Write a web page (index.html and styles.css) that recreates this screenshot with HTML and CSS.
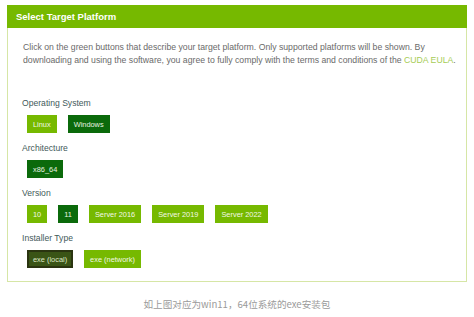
FILE: index.html
```html
<!DOCTYPE html>
<html>
<head>
<meta charset="utf-8">
<link rel="stylesheet" href="styles.css">
</head>
<body>
<div class="panel">
  <div class="panel-head">Select Target Platform</div>
  <div class="panel-body">
    <p class="intro">Click on the green buttons that describe your target platform. Only supported platforms will be shown. By<br>downloading and using the software, you agree to fully comply with the terms and conditions of the <span class="link">CUDA EULA</span>.</p>
    <div class="section">
      <div class="label">Operating System</div>
      <div class="btns">
        <span class="btn">Linux</span>
        <span class="btn on">Windows</span>
      </div>
    </div>
    <div class="section">
      <div class="label">Architecture</div>
      <div class="btns">
        <span class="btn on">x86_64</span>
      </div>
    </div>
    <div class="section">
      <div class="label">Version</div>
      <div class="btns">
        <span class="btn">10</span>
        <span class="btn on">11</span>
        <span class="btn">Server 2016</span>
        <span class="btn">Server 2019</span>
        <span class="btn">Server 2022</span>
      </div>
    </div>
    <div class="section last">
      <div class="label">Installer Type</div>
      <div class="btns">
        <span class="btn sel">exe (local)</span>
        <span class="btn">exe (network)</span>
      </div>
    </div>
  </div>
</div>
<p class="caption">如上图对应为win11，64位系统的exe安装包</p>
</body>
</html>
```

FILE: styles.css
```css
html, body {
  margin: 0;
  padding: 0;
  background: #ffffff;
}
body {
  font-family: "Liberation Sans", Arial, sans-serif;
}
.panel {
  margin: 5px 0 0 7px;
  width: 460px;
  box-sizing: border-box;
  border: 1px solid #d6e6a6;
  border-top: none;
  background: #fff;
}
.panel-head {
  background: #76b900;
  color: #ffffff;
  font-weight: bold;
  font-size: 9.5px;
  height: 23px;
  line-height: 23px;
  padding-left: 9px;
  margin: 0 -1px;
}
.panel-body {
  padding: 13px 10px 13px 14px;
}
.intro {
  margin: 0 0 30px 1px;
  font-size: 8.7px;
  line-height: 13px;
  color: #6a6a6a;
  white-space: nowrap;
}
.link {
  color: #a6cc55;
}
.section {
  margin-bottom: 9px;
}
.section.last {
  margin-bottom: 0;
}
.label {
  font-size: 8.6px;
  line-height: 12px;
  color: #3f5a5a;
  margin-bottom: 6px;
  font-weight: 500;
}
.btns {
  display: flex;
  gap: 11px;
  padding-left: 5px;
}
.btn {
  display: inline-flex;
  align-items: center;
  justify-content: center;
  height: 18px;
  padding: 0 6px;
  min-width: 8px;
  background: #76b900;
  color: #f2f8e4;
  font-size: 7.4px;
  box-sizing: border-box;
}
.btn.on {
  background: #0b6a0b;
  color: #e8f2e0;
}
.btn.sel {
  background: #3a5416;
  border: 2px solid #2a3410;
  color: #dfe8c8;
  padding: 0 4px;
}
.caption {
  margin: 15px 0 0;
  text-align: center;
  font-family: "Noto Sans CJK SC", sans-serif;
  font-size: 9.6px;
  color: #9a9a9a;
  line-height: 14px;
}
```
